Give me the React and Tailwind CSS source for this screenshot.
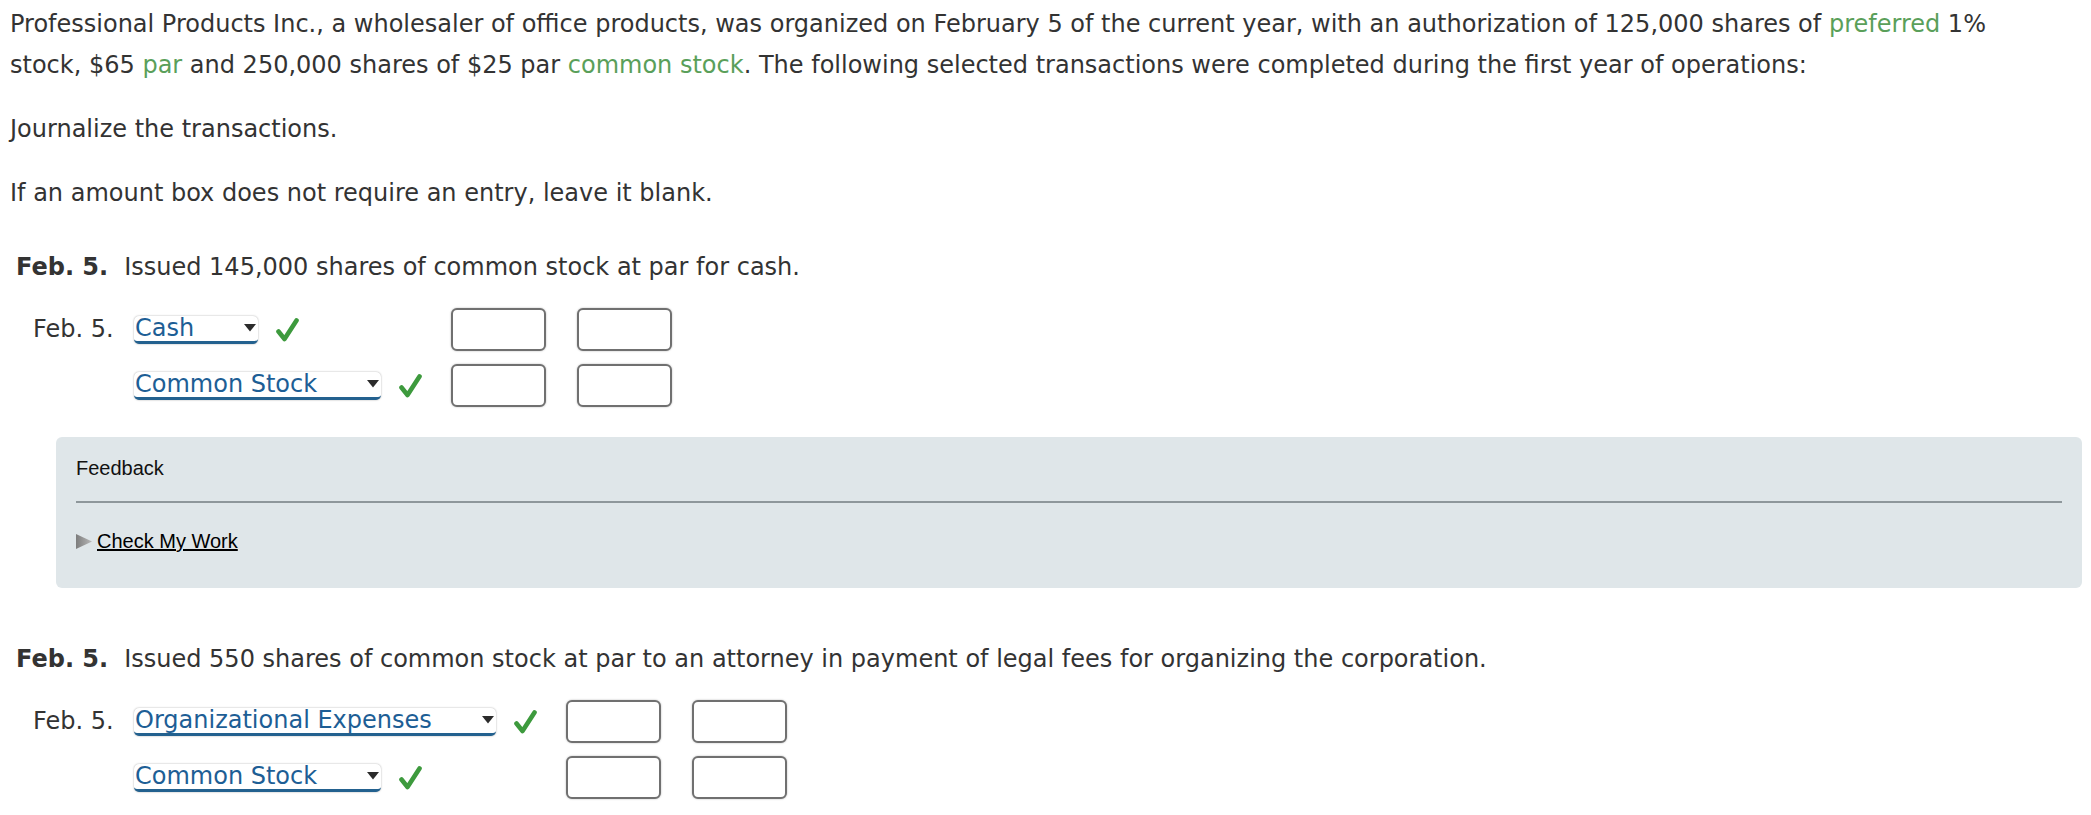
import React from 'react';

const Check = () => (
  <svg width="23" height="24" viewBox="0 0 23 24" className="shrink-0">
    <path d="M2.5 13.5 L8.5 21 L20.5 2.5" fill="none" stroke="#3d9a3d" strokeWidth="4.6" strokeLinecap="round" strokeLinejoin="round" />
  </svg>
);

const Arrow = () => (
  <svg width="12" height="8" viewBox="0 0 12 8" className="shrink-0">
    <polygon points="0,0 12,0 6,7.5" fill="#2b2b2b" />
  </svg>
);

const Select = ({ label }) => (
  <div className="flex items-center h-[28px] bg-white rounded-[5px] shadow-[0_0_2px_rgba(0,0,0,0.35)] border-b-[3px] border-[#23618f] pl-[1px] pr-[2px]">
    <span className="text-[#1d5e95] text-[24px] leading-[25px] whitespace-nowrap">{label}</span>
    <span className="ml-auto pl-[50px]">
      <Arrow />
    </span>
  </div>
);

const AmountBox = ({ first }) => (
  <div
    className={
      'w-[95px] h-[43px] bg-white border-2 border-[#707070] rounded-[6px] shadow-[0_0_2px_rgba(0,0,0,0.3)] ' +
      (first ? 'ml-[29px]' : 'ml-[31px]')
    }
  />
);

const Entry = ({ rows }) => (
  <div className="grid grid-cols-[101px_max-content_max-content_max-content] gap-y-[13px] items-center pl-[23px] mt-[20px]">
    {rows.map((r, i) => (
      <React.Fragment key={i}>
        <div className="whitespace-nowrap">{r.date}</div>
        <div className="flex items-center gap-[18px]">
          <Select label={r.account} />
          <Check />
        </div>
        <AmountBox first />
        <AmountBox />
      </React.Fragment>
    ))}
  </div>
);

const Heading = ({ children }) => (
  <div className="pl-[6px]">
    <span className="font-bold pr-[16px]">Feb. 5.</span>
    {children}
  </div>
);

const Green = ({ children }) => <span className="text-[#5a9f5a]">{children}</span>;

export default function App() {
  return (
    <div className="min-h-screen bg-white text-[#333333] font-['DejaVu_Sans',sans-serif] text-[24px] leading-[41px] px-[10px] pt-[4px]">
      <p className="mb-[23px]">
        Professional Products Inc., a wholesaler of office products, was organized on February 5 of the current year, with an
        authorization of 125,000 shares of <Green>preferred</Green> 1%
        <br />
        stock, $65 <Green>par</Green> and 250,000 shares of $25 par <Green>common stock</Green>. The following selected
        transactions were completed during the first year of operations:
      </p>
      <p className="mb-[23px]">Journalize the transactions.</p>
      <p className="mb-[33px]">If an amount box does not require an entry, leave it blank.</p>

      <Heading>Issued 145,000 shares of common stock at par for cash.</Heading>
      <Entry
        rows={[
          { date: 'Feb. 5.', account: 'Cash' },
          { date: '', account: 'Common Stock' },
        ]}
      />

      <div className="mt-[30px] ml-[46px] mr-[-1px] bg-[#dfe6e9] rounded-[6px] px-[20px] pt-[20px] pb-[35px] font-['Liberation_Sans',Arial,sans-serif] text-[20px] leading-[23px] text-[#111111]">
        <div>Feedback</div>
        <div className="mt-[21px] h-[2px] bg-[#8e979b]" />
        <div className="mt-[27px] flex items-center gap-[5px]">
          <svg width="16" height="15" viewBox="0 0 16 15">
            <defs>
              <linearGradient id="tri" x1="0" y1="0" x2="1" y2="0">
                <stop offset="0" stopColor="#7d7d7d" />
                <stop offset="1" stopColor="#b8b8b8" />
              </linearGradient>
            </defs>
            <polygon points="0,0 16,7.5 0,15" fill="url(#tri)" />
          </svg>
          <a className="underline text-black cursor-pointer">Check My Work</a>
        </div>
      </div>

      <div className="mt-[51px]">
        <Heading>
          Issued 550 shares of common stock at par to an attorney in payment of legal fees for organizing the corporation.
        </Heading>
        <Entry
          rows={[
            { date: 'Feb. 5.', account: 'Organizational Expenses' },
            { date: '', account: 'Common Stock' },
          ]}
        />
      </div>
    </div>
  );
}
